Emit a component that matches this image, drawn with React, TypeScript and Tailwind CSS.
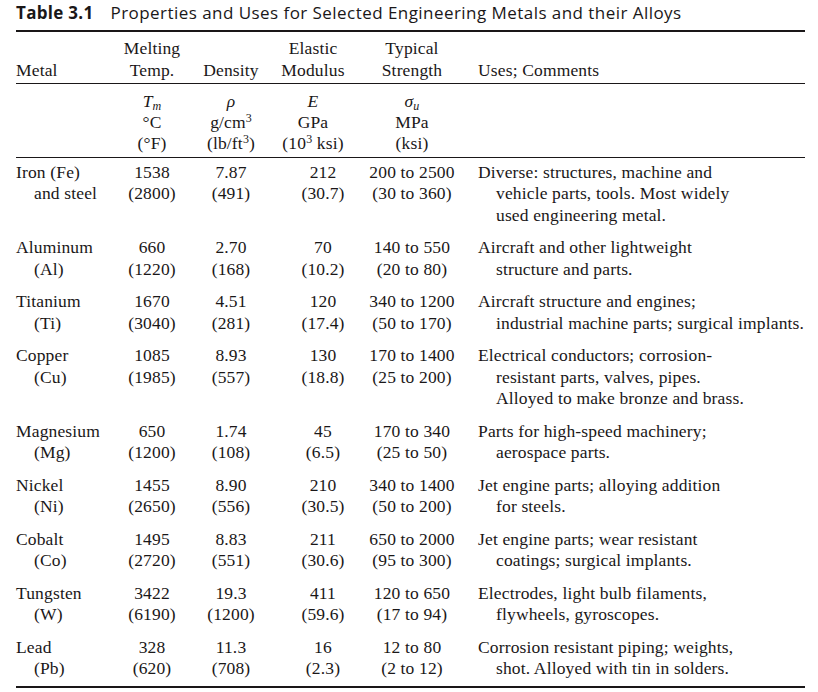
import React from "react";

type Row = {
  m: string[];
  t: string[];
  d: string[];
  e: string[];
  s: string[];
  u: string[];
};

const rows: Row[] = [
  {
    m: ["Iron (Fe)", "and steel"],
    t: ["1538", "(2800)"],
    d: ["7.87", "(491)"],
    e: ["212", "(30.7)"],
    s: ["200 to 2500", "(30 to 360)"],
    u: ["Diverse: structures, machine and", "vehicle parts, tools. Most widely", "used engineering metal."],
  },
  {
    m: ["Aluminum", "(Al)"],
    t: ["660", "(1220)"],
    d: ["2.70", "(168)"],
    e: ["70", "(10.2)"],
    s: ["140 to 550", "(20 to 80)"],
    u: ["Aircraft and other lightweight", "structure and parts."],
  },
  {
    m: ["Titanium", "(Ti)"],
    t: ["1670", "(3040)"],
    d: ["4.51", "(281)"],
    e: ["120", "(17.4)"],
    s: ["340 to 1200", "(50 to 170)"],
    u: ["Aircraft structure and engines;", "industrial machine parts; surgical implants."],
  },
  {
    m: ["Copper", "(Cu)"],
    t: ["1085", "(1985)"],
    d: ["8.93", "(557)"],
    e: ["130", "(18.8)"],
    s: ["170 to 1400", "(25 to 200)"],
    u: ["Electrical conductors; corrosion-", "resistant parts, valves, pipes.", "Alloyed to make bronze and brass."],
  },
  {
    m: ["Magnesium", "(Mg)"],
    t: ["650", "(1200)"],
    d: ["1.74", "(108)"],
    e: ["45", "(6.5)"],
    s: ["170 to 340", "(25 to 50)"],
    u: ["Parts for high-speed machinery;", "aerospace parts."],
  },
  {
    m: ["Nickel", "(Ni)"],
    t: ["1455", "(2650)"],
    d: ["8.90", "(556)"],
    e: ["210", "(30.5)"],
    s: ["340 to 1400", "(50 to 200)"],
    u: ["Jet engine parts; alloying addition", "for steels."],
  },
  {
    m: ["Cobalt", "(Co)"],
    t: ["1495", "(2720)"],
    d: ["8.83", "(551)"],
    e: ["211", "(30.6)"],
    s: ["650 to 2000", "(95 to 300)"],
    u: ["Jet engine parts; wear resistant", "coatings; surgical implants."],
  },
  {
    m: ["Tungsten", "(W)"],
    t: ["3422", "(6190)"],
    d: ["19.3", "(1200)"],
    e: ["411", "(59.6)"],
    s: ["120 to 650", "(17 to 94)"],
    u: ["Electrodes, light bulb filaments,", "flywheels, gyroscopes."],
  },
  {
    m: ["Lead", "(Pb)"],
    t: ["328", "(620)"],
    d: ["11.3", "(708)"],
    e: ["16", "(2.3)"],
    s: ["12 to 80", "(2 to 12)"],
    u: ["Corrosion resistant piping; weights,", "shot. Alloyed with tin in solders."],
  },
];

function Lines({ items }: { items: string[] }) {
  return (
    <>
      {items.map((x, i) => (
        <div key={i}>{x}</div>
      ))}
    </>
  );
}

export default function App() {
  return (
    <div className="min-h-[692px] w-[818px] bg-white text-[#1a1718]">
      <div className="ml-[16px] w-[789px]">
        <div
          className="flex h-[30px] items-center whitespace-nowrap text-[17px] leading-[26px] pb-[4px] tracking-[0.45px]"
          style={{ fontFamily: '"Open Sans", "Noto Sans", sans-serif' }}
        >
          <span className="font-bold tracking-[0.3px]">Table 3.1</span>
          <span className="ml-[17px]">Properties and Uses for Selected Engineering Metals and their Alloys</span>
        </div>
        <div className="h-[2px] bg-[#1a1718]" />
        <div
          className="text-[17.5px] tracking-[0.15px] whitespace-nowrap"
          style={{ fontFamily: '"Liberation Serif", "Times New Roman", serif' }}
        >
          <div className="flex pt-[4.5px] pb-[2.5px] leading-[22px]">
            <div className="w-[90px]">
              <div>&nbsp;</div>
              <div>Metal</div>
            </div>
            <div className="w-[92px] text-center">
              <div>Melting</div>
              <div>Temp.</div>
            </div>
            <div className="w-[66px] text-center">
              <div>&nbsp;</div>
              <div>Density</div>
            </div>
            <div className="w-[98px] text-center">
              <div>Elastic</div>
              <div>Modulus</div>
            </div>
            <div className="w-[100px] text-center">
              <div>Typical</div>
              <div>Strength</div>
            </div>
            <div className="flex-1 pl-[16px]">
              <div>&nbsp;</div>
              <div>Uses; Comments</div>
            </div>
          </div>
          <div className="h-px bg-[#1a1718]" />
          <div className="flex pt-[7px] pb-[3px] leading-[21px]">
            <div className="w-[90px]" />
            <div className="w-[92px] text-center">
              <div>
                <i>T</i>
                <sub className="text-[12px] italic">m</sub>
              </div>
              <div>°C</div>
              <div>(°F)</div>
            </div>
            <div className="w-[66px] text-center">
              <div>
                <i>ρ</i>
              </div>
              <div>
                g/cm<sup className="text-[12px]">3</sup>
              </div>
              <div>
                (lb/ft<sup className="text-[12px]">3</sup>)
              </div>
            </div>
            <div className="w-[98px] text-center">
              <div>
                <i>E</i>
              </div>
              <div>GPa</div>
              <div>
                (10<sup className="text-[12px]">3</sup> ksi)
              </div>
            </div>
            <div className="w-[100px] text-center">
              <div>
                <i>σ</i>
                <sub className="text-[12px] italic">u</sub>
              </div>
              <div>MPa</div>
              <div>(ksi)</div>
            </div>
            <div className="flex-1" />
          </div>
          <div className="h-px bg-[#1a1718]" />
          <div className="flex flex-col gap-[11px] pt-[3.7px] pb-[6px] leading-[21.5px]">
            {rows.map((r, i) => (
              <div key={i} className="flex">
                <div className="w-[90px]">
                  <div>{r.m[0]}</div>
                  <div className="pl-[18px]">{r.m[1]}</div>
                </div>
                <div className="w-[92px] text-center">
                  <Lines items={r.t} />
                </div>
                <div className="w-[66px] text-center">
                  <Lines items={r.d} />
                </div>
                <div className="w-[98px] pl-[20px] text-center">
                  <Lines items={r.e} />
                </div>
                <div className="w-[100px] text-center">
                  <Lines items={r.s} />
                </div>
                <div className="flex-1 pl-[16px]">
                  {r.u.map((x, j) => (
                    <div key={j} className={j > 0 ? "pl-[18px]" : ""}>
                      {x}
                    </div>
                  ))}
                </div>
              </div>
            ))}
          </div>
          <div className="h-[2px] bg-[#1a1718]" />
        </div>
      </div>
    </div>
  );
}
